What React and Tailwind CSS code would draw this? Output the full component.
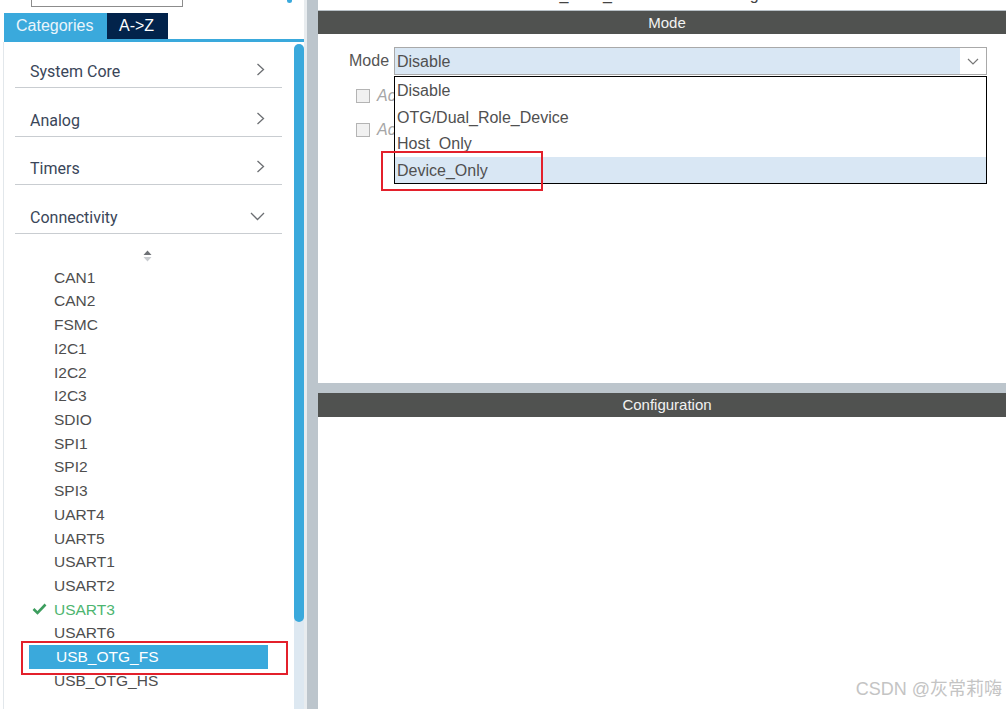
const categories = [
  { name: "System Core", open: false },
  { name: "Analog", open: false },
  { name: "Timers", open: false },
  { name: "Connectivity", open: true },
];

const peripherals = [
  { name: "CAN1" },
  { name: "CAN2" },
  { name: "FSMC" },
  { name: "I2C1" },
  { name: "I2C2" },
  { name: "I2C3" },
  { name: "SDIO" },
  { name: "SPI1" },
  { name: "SPI2" },
  { name: "SPI3" },
  { name: "UART4" },
  { name: "UART5" },
  { name: "USART1" },
  { name: "USART2" },
  { name: "USART3", ok: true },
  { name: "USART6" },
  { name: "USB_OTG_FS", selected: true },
  { name: "USB_OTG_HS" },
];

const modes = ["Disable", "OTG/Dual_Role_Device", "Host_Only", "Device_Only"];

const Chevron = ({ open }) =>
  open ? (
    <svg width="15" height="9" viewBox="0 0 15 9" className="mb-[9px]">
      <polyline points="1,1 7.5,7.5 14,1" fill="none" stroke="#6b6e72" strokeWidth="1.3" />
    </svg>
  ) : (
    <svg width="9" height="13" viewBox="0 0 9 13" className="mb-[8px]">
      <polyline points="1.5,1 7.5,6.5 1.5,12" fill="none" stroke="#6b6e72" strokeWidth="1.3" />
    </svg>
  );

const App = () => {
  return (
    <div
      className="relative w-[1006px] h-[709px] flex bg-white overflow-hidden"
      style={{ fontFamily: '"Liberation Sans", Arial, sans-serif' }}
    >
      {/* left: categories */}
      <div className="w-[304px] shrink-0 flex flex-col">
        <div className="h-[13px] flex items-start">
          <div className="ml-[31px] w-[152px] h-[7px] border border-t-0 border-[#8c8c8c]"></div>
          <div className="ml-[104px] w-[5px] h-[3px] bg-[#3aa9dc] rounded-b-full"></div>
        </div>
        <div className="h-[26px] flex pl-[4px] text-[16px] leading-[26px]">
          <div className="w-[103px] bg-[#3aa9dc] text-[#eaf5fb] pl-[12px]">Categories</div>
          <div className="w-[61px] bg-[#02234b] text-white pl-[12px]">A-&gt;Z</div>
        </div>
        <div className="h-[3px] ml-[4px] bg-[#3aa9dc]"></div>
        <div className="flex-1 min-h-0 flex ml-[3px] border-l border-[#e2e7eb]">
          <div className="flex-1 flex flex-col">
            {categories.map((c, i) => (
              <div
                key={c.name}
                className={`${i === 0 ? "h-[46px]" : "h-[48.6px]"} ml-[11px] w-[267px] flex items-end justify-between pl-[15px] pr-[17px] pb-[3px] border-b border-[#c9cdd1] text-[16px] leading-[24px] text-[#3a4659]`}
                style={{ fontFamily: "Roboto, sans-serif" }}
              >
                <span>{c.name}</span>
                <Chevron open={c.open} />
              </div>
            ))}
            <div className="h-[32px] flex items-end pb-[4px] pl-[139px]">
              <svg width="9" height="12" viewBox="0 0 9 12">
                <polygon points="4.5,0.5 8.5,5 0.5,5" fill="#6f7276" />
                <polygon points="0.5,7 8.5,7 4.5,11.5" fill="#c9ccd0" />
              </svg>
            </div>
            <ul className="text-[15.5px] leading-[23.7px] text-[#4e4e4e]">
              {peripherals.map((p) =>
                p.selected ? (
                  <li key={p.name} className="ml-[25px] w-[239px] pl-[27px] bg-[#3aa9dc] text-white">
                    {p.name}
                  </li>
                ) : (
                  <li key={p.name} className="flex items-center">
                    <span className="w-[50px] pl-[28px] flex items-center">
                      {p.ok && (
                        <svg width="15" height="12" viewBox="0 0 15 12">
                          <polyline points="1.5,6 5.5,10 13.5,1.5" fill="none" stroke="#3d9d5e" strokeWidth="2.6" />
                        </svg>
                      )}
                    </span>
                    <span className={p.ok ? "text-[#4db56f]" : ""}>{p.name}</span>
                  </li>
                )
              )}
            </ul>
          </div>
          <div className="w-[10px] mt-[2px] bg-[#dde8f1] rounded-t-full">
            <div className="h-[578px] bg-[#3aa9dc] rounded-full"></div>
          </div>
        </div>
      </div>
      <div className="w-[3px] shrink-0 bg-[#e8ecef]"></div>
      <div className="w-[11px] shrink-0 bg-[#bcc5cc]"></div>

      {/* right: mode and configuration */}
      <div className="w-[698px] shrink-0 flex flex-col">
        <div className="h-[10px] overflow-hidden">
          <div className="-mt-[15px] text-center text-[16px] leading-[20px] text-[#444]">
            USB_OTG_FS Mode and Configuration
          </div>
        </div>
        <div className="h-[24px] border-t border-[#b9c1c7] bg-[#505250] text-[#f2f2f2] text-[15px] leading-[23px] text-center">
          Mode
        </div>
        <div className="relative h-[349px] text-[16px]">
          <div className="mt-[13px] flex items-center">
            <span className="ml-[31px] w-[45px] text-[#555]">Mode</span>
            <div className="w-[593px] h-[28px] flex border border-[#a9a9a9] bg-[#d9e7f4]">
              <span className="flex-1 pl-[2px] leading-[27px] text-[#505050]">Disable</span>
              <span className="w-[26px] bg-white flex items-center justify-center">
                <svg width="12" height="7" viewBox="0 0 12 7">
                  <polyline points="1,1 6,6 11,1" fill="none" stroke="#777" strokeWidth="1.2" />
                </svg>
              </span>
            </div>
          </div>
          <div className="mt-[14px] ml-[38px] flex flex-col gap-[20px]">
            {["Activate_SOF", "Activate_VBUS"].map((t) => (
              <div key={t} className="h-[14px] flex items-center gap-[7px]">
                <span className="w-[14px] h-[14px] border border-[#b4b4b4] bg-[#f1f1f1]"></span>
                <span className="italic text-[#a6a6a6]">{t}</span>
              </div>
            ))}
          </div>

          {/* open dropdown */}
          <ul className="absolute top-[42px] left-[76px] w-[593px] h-[108px] border border-black bg-white text-[#505050] leading-[26.5px]">
            {modes.map((m) => (
              <li key={m} className={`pl-[2px] pt-[1px] h-[26.5px] ${m === "Device_Only" ? "bg-[#d9e7f4]" : ""}`}>
                {m}
              </li>
            ))}
          </ul>
        </div>
        <div className="h-[10px] bg-[#bcc5cc]"></div>
        <div className="h-[24px] bg-[#505250] text-[#f2f2f2] text-[15px] leading-[24px] text-center">
          Configuration
        </div>
        <div className="flex-1 bg-white"></div>
      </div>

      {/* annotations */}
      <div className="absolute left-[21px] top-[641px] w-[267px] h-[34px] border-2 border-[#e3202b]"></div>
      <div className="absolute left-[381px] top-[151px] w-[162px] h-[40px] border-2 border-[#e3202b]"></div>
      <div
        className="absolute right-[4px] bottom-[6px] text-[18px] text-[#c4c4c4]"
        style={{ fontFamily: '"Liberation Sans", "Noto Sans CJK SC", sans-serif' }}
      >
        CSDN @灰常莉嗨
      </div>
    </div>
  );
};

export default App;
